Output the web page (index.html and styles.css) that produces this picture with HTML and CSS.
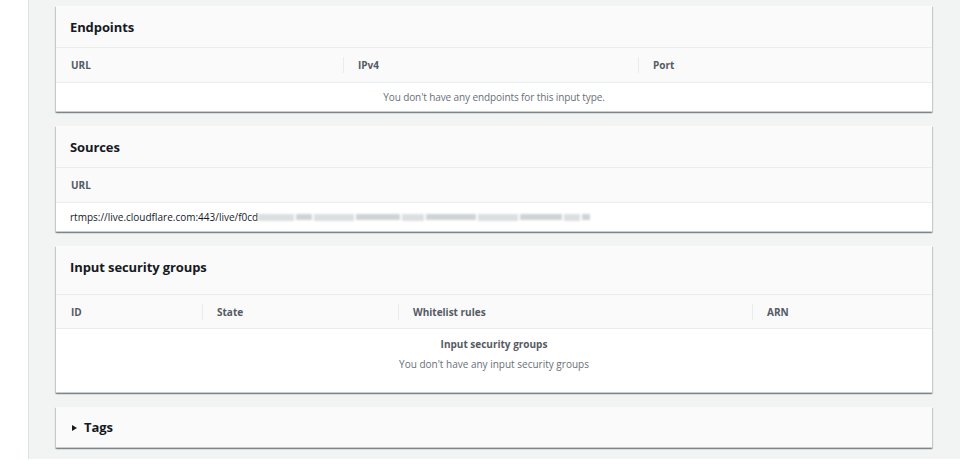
FILE: index.html
```html
<!DOCTYPE html>
<html>
<head>
<meta charset="utf-8">
<link rel="stylesheet" href="styles.css">
</head>
<body>
<div class="layout">
  <div class="sidenav"></div>
  <main class="main">
    <section class="card">
      <div class="card-header"><h2>Endpoints</h2></div>
      <div class="thead cols-3">
        <div class="th">URL</div>
        <div class="th sep">IPv4</div>
        <div class="th sep">Port</div>
      </div>
      <div class="tbody empty">You don't have any endpoints for this input type.</div>
    </section>

    <section class="card">
      <div class="card-header"><h2>Sources</h2></div>
      <div class="thead cols-1">
        <div class="th">URL</div>
      </div>
      <div class="tbody row">
        <span class="url">rtmps://live.cloudflare.com:443/live/f0cd</span><span class="blur"><i style="width:36px"></i><i style="width:16px"></i><i style="width:40px"></i><i style="width:44px"></i><i style="width:22px"></i><i style="width:50px"></i><i style="width:40px"></i><i style="width:42px"></i><i style="width:16px"></i><i style="width:8px"></i></span>
      </div>
    </section>

    <section class="card">
      <div class="card-header tall"><h2>Input security groups</h2></div>
      <div class="thead cols-4">
        <div class="th">ID</div>
        <div class="th sep">State</div>
        <div class="th sep">Whitelist rules</div>
        <div class="th sep">ARN</div>
      </div>
      <div class="tbody empty-block">
        <div class="empty-title">Input security groups</div>
        <div class="empty-text">You don't have any input security groups</div>
      </div>
    </section>

    <section class="card">
      <div class="card-header collapsed"><span class="caret"></span><h2>Tags</h2></div>
    </section>
  </main>
</div>
</body>
</html>
```

FILE: styles.css
```css
* { box-sizing: border-box; }
html, body { margin: 0; padding: 0; background: #ffffff; }
body {
  font-family: "Open Sans", "Noto Sans", "Liberation Sans", sans-serif;
  color: #16191f;
}
.layout {
  display: flex;
  height: 459px;
}
.sidenav {
  width: 29px;
  flex: none;
  background: #ffffff;
  border-right: 1px solid #dfe3e3;
}
.main {
  flex: 1;
  background: #f2f3f3;
  padding: 6px 28px 0 27px;
  display: flex;
  flex-direction: column;
  gap: 14px;
  overflow: hidden;
}
.card {
  background: #ffffff;
  box-shadow: 0 1px 1px 0 rgba(0, 28, 36, 0.3), 1px 1px 1px 0 rgba(0, 28, 36, 0.15), -1px 1px 1px 0 rgba(0, 28, 36, 0.15);
  border-bottom: 1px solid #c9cfd1;
}
.card-header {
  background: #fafafa;
  height: 42px;
  padding: 0 14px;
  display: flex;
  align-items: center;
  border-bottom: 1px solid #eaeded;
}
.card-header.tall {
  height: 49px;
  padding-bottom: 7px;
}
.card-header.collapsed {
  border-bottom: none;
  height: 40px;
  padding-left: 16px;
}
h2 {
  margin: 0;
  font-size: 13px;
  font-weight: 700;
  color: #16191f;
  letter-spacing: -0.1px;
}
.caret {
  width: 0;
  height: 0;
  border-top: 3.5px solid transparent;
  border-bottom: 3.5px solid transparent;
  border-left: 5px solid #16191f;
  margin-right: 7px;
  margin-top: 1px;
}
.thead {
  background: #fafafa;
  height: 35px;
  display: grid;
  align-items: center;
  border-bottom: 1px solid #eaeded;
}
.cols-1 { grid-template-columns: 1fr; }
.cols-3 { grid-template-columns: 287px 295px 1fr; }
.cols-4 { grid-template-columns: 146px 196px 354px 1fr; height: 34px; }
.th {
  font-size: 10px;
  font-weight: 700;
  color: #545b64;
  padding: 0 14px 0 15px;
  line-height: 16px;
}
.th.sep {
  border-left: 1px solid #eaeded;
  padding-left: 14px;
}
.tbody {
  background: #ffffff;
  font-size: 10px;
  color: #545b64;
}
.tbody.empty {
  height: 28px;
  display: flex;
  align-items: center;
  justify-content: center;
  color: #687078;
  letter-spacing: -0.1px;
}
.tbody.row {
  height: 28px;
  display: flex;
  align-items: center;
  padding: 0 14px;
  color: #16191f;
}
.blur {
  display: inline-flex;
  gap: 2px;
  align-items: center;
  margin-left: 0;
}
.blur i {
  display: block;
  height: 7px;
  background: #dcdfe0;
  filter: blur(1.2px);
}
.blur i:nth-child(2n) { background: #cfd3d5; height: 6px; }
.tbody.empty-block {
  height: 63px;
  display: flex;
  flex-direction: column;
  align-items: center;
  padding-top: 8px;
  gap: 6px;
}
.empty-title {
  font-weight: 700;
  color: #545b64;
  line-height: 14px;
}
.empty-text {
  color: #687078;
  line-height: 14px;
}
```
